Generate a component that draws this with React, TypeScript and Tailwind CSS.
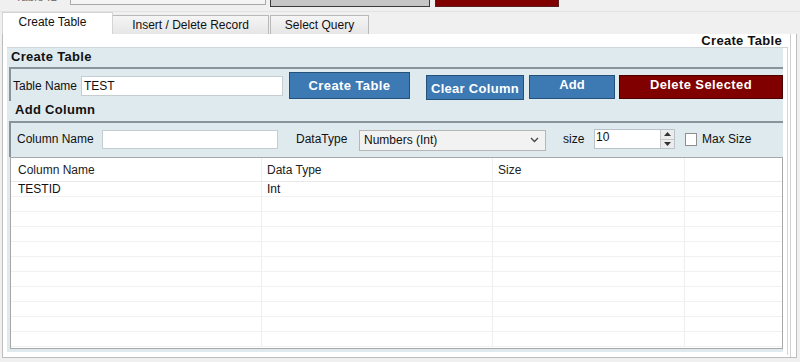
import React from "react";

const font = { fontFamily: '"Liberation Sans", Arial, sans-serif' };

function Grid() {
  const rows = Array.from({ length: 11 });
  return (
    <div className="ml-[3px] w-[773px] h-[192px] bg-white border border-[#a8a8a8] overflow-hidden flex flex-col">
      <div className="flex h-[24px] border-b border-[#e8e8e8] text-[12px] text-[#222] items-center">
        <div className="w-[251px] h-full pl-[7px] flex items-center border-r border-[#eeeeee]">Column Name</div>
        <div className="w-[231px] h-full pl-[5px] flex items-center border-r border-[#eeeeee]">Data Type</div>
        <div className="w-[192px] h-full pl-[5px] flex items-center border-r border-[#eeeeee]">Size</div>
        <div className="flex-1 h-full"></div>
      </div>
      {rows.map((_, i) => (
        <div key={i} className="flex h-[15px] border-b border-[#f1f1f1] text-[12px] text-[#111] shrink-0">
          <div className="w-[251px] h-full pl-[7px] flex items-center border-r border-[#eeeeee]">{i === 0 ? "TESTID" : ""}</div>
          <div className="w-[231px] h-full pl-[5px] flex items-center border-r border-[#eeeeee]">{i === 0 ? "Int" : ""}</div>
          <div className="w-[192px] h-full border-r border-[#eeeeee]"></div>
          <div className="flex-1 h-full"></div>
        </div>
      ))}
    </div>
  );
}

export default function App() {
  return (
    <div className="w-[800px] h-[362px] bg-[#f0f0f0] overflow-hidden flex flex-col" style={font}>
      {/* top strip remnants */}
      <div className="h-[8px] flex items-start overflow-hidden shrink-0">
        <div className="ml-[15px] w-[45px] h-[4px] overflow-hidden text-[12px] leading-[12px] text-[#777]">
          <div className="-mt-[9px]">Table ID</div>
        </div>
        <div className="ml-[10px] w-[196px] h-[5px] bg-[#f4f4f4] border-b border-l border-r border-[#a9a9a9]"></div>
        <div className="ml-[4px] w-[160px] h-[7px] bg-[#c6c6c6] border-b border-l border-r border-[#3a3a3a]"></div>
        <div className="ml-[5px] w-[124px] h-[7px] bg-[#800000] border-b border-l border-r border-[#5a2020]"></div>
      </div>
      <div className="h-[4px] border-b border-[#e2e2e2] shrink-0"></div>
      {/* tabs */}
      <div className="h-[22px] flex items-end pl-[2px] shrink-0">
        <div className="w-[111px] h-[22px] bg-white border-t border-l border-r border-[#d4d4d4] text-[12px] text-[#111] flex items-center justify-center pb-[3px] pr-[10px]">
          Create Table
        </div>
        <div className="w-[156px] h-[19px] bg-gradient-to-b from-[#f5f5f5] to-[#e6e6e6] border-t border-r border-[#b9b9b9] text-[12px] text-[#111] flex items-center justify-center">
          Insert / Delete Record
        </div>
        <div className="ml-[1px] w-[99px] h-[19px] bg-gradient-to-b from-[#f5f5f5] to-[#e6e6e6] border-t border-l border-r border-[#b9b9b9] text-[12px] text-[#111] flex items-center justify-center">
          Select Query
        </div>
      </div>
      {/* panel */}
      <div className="ml-[2px] w-[795px] h-[324px] bg-white border-l border-r border-b border-[#bdbdbd] flex shrink-0">
        <div className="w-[785px] flex flex-col">
          <div className="h-[13px] text-right pr-[6px] text-[13px] leading-[13px] font-bold text-[#111] tracking-[0.3px]">
            Create Table
          </div>
          <div className="ml-[4px] w-[781px] h-[308px] border-r border-t border-[#cfd6da] pr-[4px] flex flex-col">
            <div className="w-[776px] h-[304px] bg-[#dfeaef] flex flex-col">
              <div className="h-[19px] pl-[4px] pt-[2px] text-[13px] leading-[14px] font-bold text-[#111] tracking-[0.3px]">
                Create Table
              </div>
              {/* row 1 */}
              <div className="ml-[2px] h-[34px] border-t-2 border-l-2 border-t-[#8a9399] border-l-[#8a9399] flex items-start">
                <div className="ml-[2px] mt-[10px] w-[68px] text-[12px] leading-[14px] text-[#111]">Table Name</div>
                <div className="mt-[7px] w-[202px] h-[20px] bg-white border border-[#c5cdd2] text-[12px] leading-[18px] pl-[2px] text-[#111]">
                  TEST
                </div>
                <div className="ml-[6px] mt-[3px] w-[121px] h-[27px] bg-[#3d79b3] border border-[#24507a] text-white text-[13px] font-bold tracking-[0.4px] flex items-center justify-center">
                  Create Table
                </div>
                <div className="ml-[16px] mt-[6px] w-[98px] h-[25px] bg-[#3d79b3] border border-[#24507a] text-white text-[13px] font-bold tracking-[0.3px] flex items-center justify-center pt-[2px]">
                  Clear Column
                </div>
                <div className="ml-[5px] mt-[6px] w-[86px] h-[24px] bg-[#3d79b3] border border-[#24507a] text-white text-[13px] font-bold flex justify-center pt-[1px] leading-[15px]">
                  Add
                </div>
                <div className="ml-[4px] mt-[6px] w-[164px] h-[24px] bg-[#800000] border border-[#4a0000] text-white text-[13px] font-bold tracking-[0.4px] flex justify-center pt-[1px] leading-[15px]">
                  Delete Selected
                </div>
              </div>
              <div className="h-[20px] pl-[8px] pt-[2px] text-[13px] leading-[14px] font-bold text-[#111] tracking-[0.3px]">
                Add Column
              </div>
              {/* row 2 */}
              <div className="ml-[2px] h-[36px] border-t-2 border-l-2 border-t-[#8a9399] border-l-[#8a9399] flex items-center pb-[2px]">
                <div className="ml-[6px] w-[85px] text-[12px] text-[#111]">Column Name</div>
                <div className="w-[176px] h-[19px] bg-white border border-[#c5cdd2]"></div>
                <div className="ml-[18px] w-[63px] text-[12px] text-[#111]">DataType</div>
                <div className="w-[187px] h-[21px] mt-[2px] bg-[#f2f2f2] border border-[#b6b6b6] flex items-center pl-[4px] pr-[6px] text-[12px] text-[#111]">
                  <span className="flex-1">Numbers (Int)</span>
                  <svg width="9" height="6" viewBox="0 0 9 6">
                    <polyline points="1,1 4.5,4.5 8,1" fill="none" stroke="#444" strokeWidth="1.3" />
                  </svg>
                </div>
                <div className="ml-[17px] w-[31px] text-[12px] text-[#111]">size</div>
                <div className="w-[81px] h-[20px] bg-white border border-[#b9c2c8] flex text-[12px] text-[#111]">
                  <span className="flex-1 pl-[1px] leading-[14px]">10</span>
                  <div className="w-[14px] h-full border-l border-[#c8c8c8] bg-[#ececec] flex flex-col">
                    <div className="flex-1 flex items-center justify-center border-b border-[#c8c8c8]">
                      <svg width="7" height="4" viewBox="0 0 7 4"><polygon points="0,4 3.5,0 7,4" fill="#333" /></svg>
                    </div>
                    <div className="flex-1 flex items-center justify-center">
                      <svg width="7" height="4" viewBox="0 0 7 4"><polygon points="0,0 3.5,4 7,0" fill="#333" /></svg>
                    </div>
                  </div>
                </div>
                <div className="ml-[10px] w-[12px] h-[13px] bg-white border border-[#8f8f8f]"></div>
                <div className="ml-[5px] text-[12px] text-[#111]">Max Size</div>
              </div>
              <Grid />
            </div>
          </div>
        </div>
        <div className="ml-[2px] h-full border-l border-[#cfcfcf]"></div>
      </div>
    </div>
  );
}
